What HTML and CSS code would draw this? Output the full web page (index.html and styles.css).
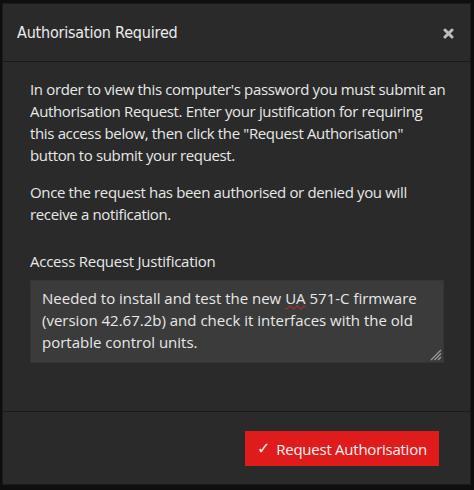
FILE: index.html
```html
<!DOCTYPE html>
<html>
<head>
<meta charset="utf-8">
<link rel="stylesheet" href="styles.css">
</head>
<body>
<div class="dialog">
  <div class="dialog-header">
    <h1 class="dialog-title">Authorisation Required</h1>
    <span class="close" aria-label="Close">
      <svg width="11" height="11" viewBox="0 0 11 11"><path d="M2 2 L9 9 M9 2 L2 9" stroke="#bdbdbd" stroke-width="3" stroke-linecap="round"/></svg>
    </span>
  </div>
  <div class="dialog-body">
    <p class="para">In order to view this computer's password you must submit an Authorisation Request. Enter your justification for requiring this access below, then click the "Request Authorisation" button to submit your request.</p>
    <p class="para">Once the request has been authorised or denied you will receive a notification.</p>
    <label class="field-label">Access Request Justification</label>
    <div class="textarea">Needed to install and test the new <span class="spell">UA</span> 571-C firmware (version 42.67.2b) and check it interfaces with the old portable control units.<svg class="grip" width="13" height="13" viewBox="0 0 13 13"><path d="M12 2 L2 12 M12 5.5 L5.5 12 M12 9 L9 12" stroke="#9a9a9a" stroke-width="1.3"/></svg></div>
  </div>
  <div class="dialog-footer">
    <button class="btn-primary"><span class="check">✓</span>Request Authorisation</button>
  </div>
</div>
</body>
</html>
```
FILE: styles.css
```css
html, body {
  margin: 0;
  padding: 0;
  background: #0e0e0e;
}
.dialog {
  box-sizing: border-box;
  margin: 3px 3px 0 2px;
  width: 469px;
  height: 482px;
  background: #2a2a2a;
  border: 1px solid #1b1b1b;
  display: flex;
  flex-direction: column;
  font-family: "Open Sans", "Noto Sans", sans-serif;
  color: #e8e8e8;
}
.dialog-header {
  height: 57px;
  flex: none;
  display: flex;
  align-items: center;
  justify-content: space-between;
  padding: 0 16px 0 14px;
  border-bottom: 1px solid #1a1a1a;
}
.dialog-title {
  margin: 0;
  font-family: "DejaVu Sans", sans-serif;
  font-stretch: condensed;
  font-weight: normal;
  font-size: 16px;
  color: #ececec;
  letter-spacing: -0.2px;
}
.close {
  display: flex;
  margin-top: 2px;
}
.dialog-body {
  flex: 1;
  padding: 16px 26px 0 27px;
  border-bottom: 1px solid #1a1a1a;
}
.para {
  margin: 0 -6px 15px 0;
  font-size: 15px;
  line-height: 22px;
  letter-spacing: -0.35px;
}
.field-label {
  display: block;
  font-size: 15px;
  line-height: 22px;
  letter-spacing: -0.25px;
  margin-top: 25px;
  margin-bottom: 8px;
}
.textarea {
  position: relative;
  box-sizing: border-box;
  height: 83px;
  background: #3b3b3b;
  border: 1px solid #353535;
  padding: 6px 11px;
  font-size: 15px;
  line-height: 22px;
  letter-spacing: 0;
  color: #e8e8e8;
}
.spell {
  text-decoration: underline wavy #d22;
  text-decoration-thickness: 1px;
}
.grip {
  position: absolute;
  right: 1px;
  bottom: 1px;
}
.dialog-footer {
  height: 72px;
  flex: none;
  display: flex;
  justify-content: flex-end;
  align-items: flex-start;
  padding: 19px 31px 0 0;
  box-sizing: border-box;
}
.btn-primary {
  height: 35px;
  width: 194px;
  background: #e01b1b;
  border: none;
  color: #f4f4f4;
  font-family: "Open Sans", "Noto Sans", sans-serif;
  font-size: 15px;
  letter-spacing: -0.25px;
  display: flex;
  align-items: center;
  justify-content: center;
  padding: 0;
}
.check {
  margin-right: 6px;
  font-family: "DejaVu Sans", sans-serif;
  font-size: 16px;
}
```
